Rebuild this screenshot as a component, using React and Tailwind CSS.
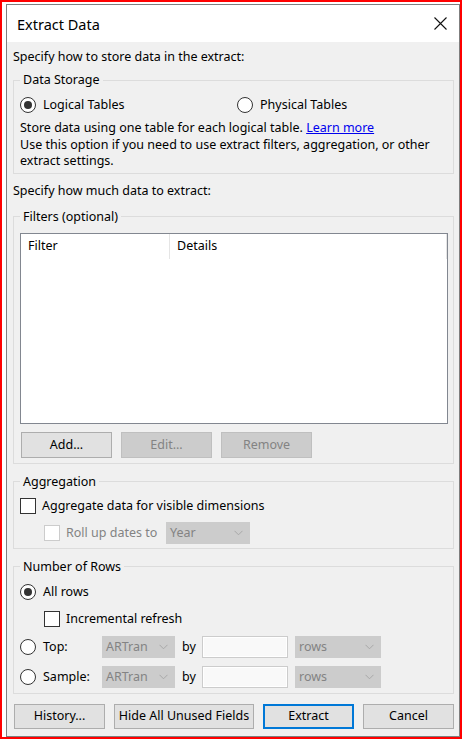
import React from "react";

function Radio({ checked }) {
  return (
    <span className="w-4 h-4 rounded-full border border-[#333333] bg-white flex items-center justify-center shrink-0">
      {checked && <span className="w-2 h-2 rounded-full bg-[#333333]" />}
    </span>
  );
}

function Check({ disabled }) {
  return (
    <span
      className={
        disabled
          ? "w-4 h-4 border border-[#cccccc] bg-white shrink-0"
          : "w-4 h-4 border border-[#333333] bg-white shrink-0"
      }
    />
  );
}

function Chevron() {
  return (
    <svg width="9" height="6" viewBox="0 0 9 6" className="shrink-0">
      <path d="M0.5 0.8 L4.5 4.8 L8.5 0.8" fill="none" stroke="#a8a8a8" strokeWidth="1" />
    </svg>
  );
}

function Combo({ text, className }) {
  return (
    <div
      className={
        "h-[22px] bg-[#cccccc] flex items-center justify-between pl-[4px] pr-[7px] text-[#838383] " +
        className
      }
    >
      <span>{text}</span>
      <Chevron />
    </div>
  );
}

function Btn({ children, disabled, primary, className }) {
  let cls =
    "flex items-center justify-center shrink-0 border " +
    (disabled
      ? "bg-[#cccccc] border-[#bfbfbf] text-[#838383] "
      : primary
      ? "bg-[#e1e1e1] border-2 border-[#0078d7] text-black "
      : "bg-[#e1e1e1] border-[#adadad] text-black ");
  return <div className={cls + className}>{children}</div>;
}

function Group({ title, children, className }) {
  return (
    <fieldset className={"border border-[#dcdcdc] px-[6px] pr-[5px] " + (className || "")}>
      <legend className="px-[3px] leading-4 h-4">{title}</legend>
      {children}
    </fieldset>
  );
}

export default function App() {
  return (
    <div className="w-[462px] h-[739px] border-2 border-[#ff0000] bg-white pl-1 pt-[2px] flex flex-col overflow-hidden font-['Noto_Sans',sans-serif] text-[12.5px] leading-4 text-black">
      <div className="flex-1 border border-[#7f7f7f] flex flex-col bg-[#f0f0f0] min-h-0">
        {/* Title bar */}
        <div className="h-[37px] bg-white flex items-center justify-between pl-[10px] pr-[12px] shrink-0">
          <span className="text-[14.5px] leading-5">Extract Data</span>
          <svg width="13" height="13" viewBox="0 0 13 13">
            <path d="M0.5 0.5 L12.5 12.5 M12.5 0.5 L0.5 12.5" stroke="#111111" strokeWidth="1.1" fill="none" />
          </svg>
        </div>

        {/* Body */}
        <div className="flex flex-col pl-[6px] pr-[5px] pt-[7px]">
          <div className="h-4">Specify how to store data in the extract:</div>

          <Group title="Data Storage" className="mt-[7px] pb-[3px]">
            <div className="flex items-center h-[18px] mt-[8px]">
              <div className="flex items-center gap-[7px] w-[217px]">
                <Radio checked />
                <span>Logical Tables</span>
              </div>
              <div className="flex items-center gap-[7px]">
                <Radio />
                <span>Physical Tables</span>
              </div>
            </div>
            <div className="mt-[6px] leading-[16.5px]">
              <div>
                Store data using one table for each logical table.{" "}
                <span className="text-[#0000ee] underline">Learn more</span>
              </div>
              <div>Use this option if you need to use extract filters, aggregation, or other</div>
              <div>extract settings.</div>
            </div>
          </Group>

          <div className="h-4 mt-[9px]">Specify how much data to extract:</div>

          <Group title="Filters (optional)" className="mt-[10px] pb-[5px]">
            <div className="mt-[8px] h-[191px] border border-[#828790] bg-white flex flex-col">
              <div className="h-[25px] flex">
                <div className="w-[149px] border-r border-[#e5e5e5] pl-[7px] flex items-center">Filter</div>
                <div className="flex-1 border-r border-[#e5e5e5] pl-[7px] flex items-center">Details</div>
              </div>
            </div>
            <div className="flex gap-[9px] mt-[8px] ml-px">
              <Btn className="w-[91px] h-[26px]">Add...</Btn>
              <Btn disabled className="w-[91px] h-[26px]">Edit...</Btn>
              <Btn disabled className="w-[91px] h-[26px]">Remove</Btn>
            </div>
          </Group>

          <Group title="Aggregation" className="mt-[10px] pb-[4px]">
            <div className="flex items-center gap-[6px] h-4 mt-[8px]">
              <Check />
              <span>Aggregate data for visible dimensions</span>
            </div>
            <div className="flex items-center h-[22px] mt-[8px] pl-[24px]">
              <div className="flex items-center gap-[6px] w-[122px] text-[#838383]">
                <Check disabled />
                <span>Roll up dates to</span>
              </div>
              <Combo text="Year" className="w-[84px]" />
            </div>
          </Group>

          <Group title="Number of Rows" className="mt-[10px] pb-[5px]">
            <div className="flex items-center gap-[7px] h-[18px] mt-[8px]">
              <Radio checked />
              <span>All rows</span>
            </div>
            <div className="flex items-center gap-[6px] h-[18px] mt-[9px] pl-[24px]">
              <Check />
              <span>Incremental refresh</span>
            </div>
            {["Top:", "Sample:"].map((t) => (
              <div key={t} className="flex items-center h-[22px] mt-[8px]">
                <div className="flex items-center gap-[7px] w-[82px]">
                  <Radio />
                  <span>{t}</span>
                </div>
                <Combo text="ARTran" className="w-[73px]" />
                <span className="w-[27px] pl-[7px]">by</span>
                <div className="w-[86px] h-[22px] border border-[#cccccc] bg-[#f9f9f9] shadow-[inset_0_0_0_1px_#ffffff]" />
                <Combo text="rows" className="w-[86px] ml-[7px]" />
              </div>
            ))}
          </Group>

          <div className="flex gap-[9px] mt-[10px] ml-px">
            <Btn className="w-[91px] h-[25px]">History...</Btn>
            <Btn className="w-[140px] h-[25px]">Hide All Unused Fields</Btn>
            <Btn primary className="w-[91px] h-[25px]">Extract</Btn>
            <Btn className="w-[91px] h-[25px]">Cancel</Btn>
          </div>
        </div>
      </div>
    </div>
  );
}
